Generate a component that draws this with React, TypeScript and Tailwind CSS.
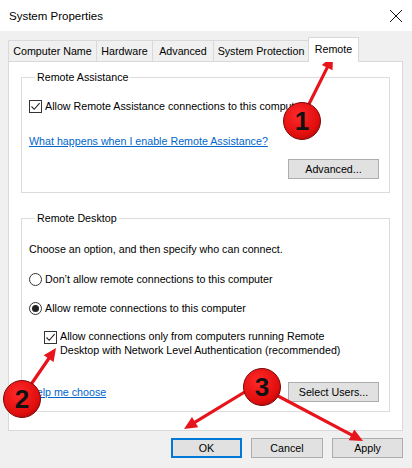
/* System Properties dialog — Remote tab, with red callouts */

const tabs = ['Computer Name', 'Hardware', 'Advanced', 'System Protection'];
const tabW = ['w-[89px]', 'w-[57px]', 'w-[62px]', 'w-[96px]'];

function CheckBox() {
  return (
    <span className="w-[13px] h-[13px] shrink-0 border border-[#333] bg-white flex items-center justify-center">
      <svg width="11" height="11" viewBox="0 0 11 11">
        <path d="M1.5 5.5 L4.2 8.3 L9.6 2.2" fill="none" stroke="#222" strokeWidth="1.1" />
      </svg>
    </span>
  );
}

function Radio({ on }: { on?: boolean }) {
  return (
    <span className="w-[13px] h-[13px] shrink-0 rounded-full border border-[#333] bg-white flex items-center justify-center">
      {on && <span className="w-[7px] h-[7px] rounded-full bg-[#222]" />}
    </span>
  );
}

function Btn({ label, w, def }: { label: string; w: string; def?: boolean }) {
  return (
    <div className={`${w} h-[20px] flex items-center justify-center bg-[#e1e1e1] ${def ? 'border-2 border-[#0078d7]' : 'border border-[#adadad]'}`}>
      {label}
    </div>
  );
}

function Arrow({ x1, y1, x2, y2 }: { x1: number; y1: number; x2: number; y2: number }) {
  const a = Math.atan2(y2 - y1, x2 - x1);
  const L = 13, W = 6;
  const bx = x2 - L * Math.cos(a), by = y2 - L * Math.sin(a);
  const px = -Math.sin(a) * W, py = Math.cos(a) * W;
  return (
    <g>
      <line x1={x1} y1={y1} x2={bx} y2={by} stroke="#e8141b" strokeWidth="3.2" strokeLinecap="round" />
      <polygon points={`${x2},${y2} ${bx + px},${by + py} ${bx - px},${by - py}`} fill="#e8141b" />
    </g>
  );
}

function Badge({ cx, cy, n }: { cx: number; cy: number; n: string }) {
  return (
    <g>
      <circle cx={cx} cy={cy} r="18.5" fill="url(#rg)" stroke="#7a0a0a" strokeWidth="1" />
      <text x={cx} y={cy + 9} textAnchor="middle" fontSize="26" fontWeight="bold" fill="#111"
        fontFamily="'Liberation Sans', Arial, sans-serif">{n}</text>
    </g>
  );
}

export default function App() {
  return (
    <div className="relative w-[412px] h-[468px] overflow-hidden bg-[#f0f0f0] text-[10.7px] text-black font-['Liberation_Sans',sans-serif] leading-[16px] whitespace-nowrap">
      {/* Title bar */}
      <div className="h-[31px] bg-white flex items-center justify-between pl-[9px] pr-[9px]">
        <span className="text-[11.5px]">System Properties</span>
        <svg width="14" height="14" viewBox="0 0 14 14">
          <path d="M1 1 L13 13 M13 1 L1 13" stroke="#111" strokeWidth="1" />
        </svg>
      </div>

      <div className="pl-[8px] pr-[9px] pt-[6px]">
        {/* Tabs */}
        <div className="flex items-end h-[24px]">
          {tabs.map((t, i) => (
            <div key={t} className={`${tabW[i]} h-[21px] flex items-center justify-center border border-b-0 border-[#d9d9d9] -ml-px first:ml-0 bg-[#f0f0f0]`}>
              {t}
            </div>
          ))}
          <div className="w-[51px] h-[25px] -mb-px relative z-10 flex items-start pt-[3px] justify-center bg-white border border-b-0 border-[#d9d9d9] -ml-px">
            Remote
          </div>
        </div>

        {/* Tab panel */}
        <div className="h-[370px] bg-white border border-[#d9d9d9] pt-[7px] px-[12px]">
          <fieldset className="h-[124px] border border-[#dcdcdc] px-[7px]">
            <legend className="ml-[6px] px-[2px]">Remote Assistance</legend>
            <div className="flex items-center gap-[3px] mt-[13px]">
              <CheckBox />
              <span>Allow Remote Assistance connections to this computer</span>
            </div>
            <div className="mt-[19px] text-[#0066cc] underline">What happens when I enable Remote Assistance?</div>
            <div className="flex justify-end mt-[10px] mr-[3px]">
              <Btn label="Advanced..." w="w-[91px]" />
            </div>
          </fieldset>

          <fieldset className="h-[202px] mt-[17px] border border-[#dcdcdc] px-[7px]">
            <legend className="ml-[6px] px-[2px]">Remote Desktop</legend>
            <div className="mt-[15px]">Choose an option, and then specify who can connect.</div>
            <div className="flex items-center gap-[3px] mt-[14px]">
              <Radio />
              <span>Don’t allow remote connections to this computer</span>
            </div>
            <div className="flex items-center gap-[3px] mt-[13px]">
              <Radio on />
              <span>Allow remote connections to this computer</span>
            </div>
            <div className="flex items-start gap-[3px] mt-[13px] ml-[15px] leading-[14px]">
              <span className="mt-[2px]"><CheckBox /></span>
              <span>Allow connections only from computers running Remote<br />Desktop with Network Level Authentication (recommended)</span>
            </div>
            <div className="flex items-center justify-between mt-[25px] mr-[3px]">
              <span className="text-[#0066cc] underline">Help me choose</span>
              <Btn label="Select Users..." w="w-[91px]" />
            </div>
          </fieldset>
        </div>

        {/* Dialog buttons */}
        <div className="flex justify-end gap-[9px] mt-[7px]">
          <Btn label="OK" w="w-[71px]" def />
          <Btn label="Cancel" w="w-[72px]" />
          <Btn label="Apply" w="w-[71px]" />
        </div>
      </div>

      {/* Red callouts */}
      <svg className="absolute inset-0 pointer-events-none" width="412" height="468">
        <defs>
          <radialGradient id="rg" cx="0.4" cy="0.35" r="0.7">
            <stop offset="0" stopColor="#ff2a2a" />
            <stop offset="0.8" stopColor="#e00d0d" />
            <stop offset="1" stopColor="#b50808" />
          </radialGradient>
        </defs>
        <Arrow x1={309} y1={104} x2={333} y2={56} />
        <Arrow x1={32} y1={383} x2={56} y2={348} />
        <Arrow x1={248} y1={390} x2={184} y2={429} />
        <Arrow x1={278} y1={396} x2={363} y2={441} />
        <Badge cx={302} cy={121} n="1" />
        <Badge cx={22} cy={399} n="2" />
        <Badge cx={262} cy={387} n="3" />
      </svg>
    </div>
  );
}
